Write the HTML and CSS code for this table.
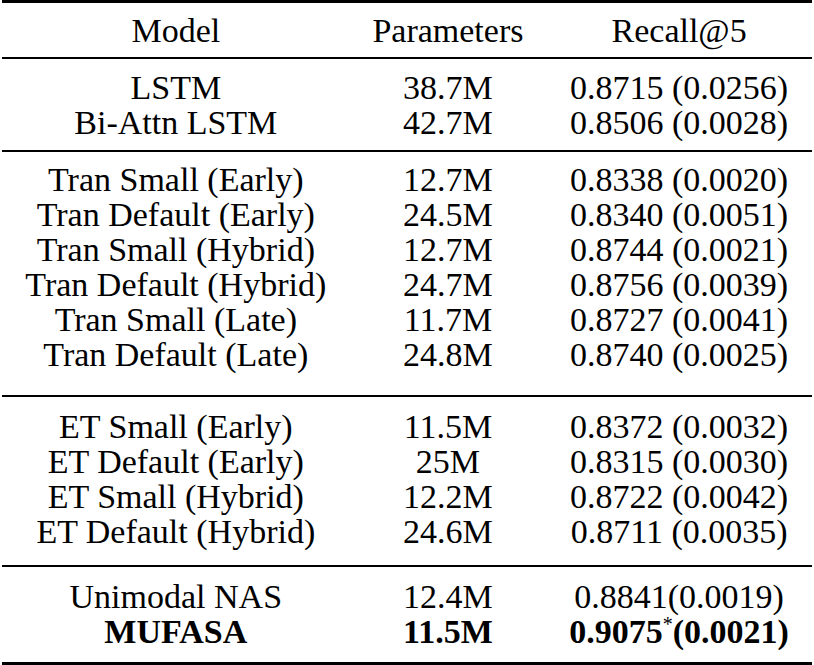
FILE: index.html
```html
<!DOCTYPE html>
<html>
<head>
<meta charset="utf-8">
<link rel="stylesheet" href="styles.css">
</head>
<body>
<div class="wrap">
<table class="results">
  <thead>
    <tr><th>Model</th><th>Parameters</th><th>Recall@5</th></tr>
  </thead>
  <tbody class="g g1">
    <tr><td>LSTM</td><td>38.7M</td><td>0.8715 (0.0256)</td></tr>
    <tr><td>Bi-Attn LSTM</td><td>42.7M</td><td>0.8506 (0.0028)</td></tr>
  </tbody>
  <tbody class="g g2">
    <tr><td>Tran Small (Early)</td><td>12.7M</td><td>0.8338 (0.0020)</td></tr>
    <tr><td>Tran Default (Early)</td><td>24.5M</td><td>0.8340 (0.0051)</td></tr>
    <tr><td>Tran Small (Hybrid)</td><td>12.7M</td><td>0.8744 (0.0021)</td></tr>
    <tr><td>Tran Default (Hybrid)</td><td>24.7M</td><td>0.8756 (0.0039)</td></tr>
    <tr><td>Tran Small (Late)</td><td>11.7M</td><td>0.8727 (0.0041)</td></tr>
    <tr><td>Tran Default (Late)</td><td>24.8M</td><td>0.8740 (0.0025)</td></tr>
  </tbody>
  <tbody class="g g3">
    <tr><td>ET Small (Early)</td><td>11.5M</td><td>0.8372 (0.0032)</td></tr>
    <tr><td>ET Default (Early)</td><td>25M</td><td>0.8315 (0.0030)</td></tr>
    <tr><td>ET Small (Hybrid)</td><td>12.2M</td><td>0.8722 (0.0042)</td></tr>
    <tr><td>ET Default (Hybrid)</td><td>24.6M</td><td>0.8711 (0.0035)</td></tr>
  </tbody>
  <tbody class="g g4">
    <tr><td>Unimodal NAS</td><td>12.4M</td><td>0.8841(0.0019)</td></tr>
    <tr class="best"><td>MUFASA</td><td>11.5M</td><td>0.9075<sup class="star">*</sup>(0.0021)</td></tr>
  </tbody>
</table>
</div>
</body>
</html>
```

FILE: styles.css
```css
html, body {
  margin: 0;
  padding: 0;
  background: #fff;
}

.wrap {
  padding: 0 2px;
}

.results {
  width: 810px;
  border-collapse: separate;
  border-spacing: 0;
  font-family: "Liberation Serif", "Times New Roman", serif;
  font-size: 34px;
  color: #000;
}

.results th,
.results td {
  font-weight: normal;
  text-align: center;
  white-space: nowrap;
  padding: 0 22px;
  height: 35px;
  line-height: 35px;
}

.results thead th {
  border-top: 3px solid #000;
  border-bottom: 2px solid #000;
  padding-top: 10px;
  padding-bottom: 9px;
}

.results tbody.g + tbody.g tr:first-child td {
  border-top: 2px solid #000;
}

.results tbody.g4 tr:last-child td {
  border-bottom: 3px solid #000;
}

.results tbody.g1 tr:first-child td { padding-top: 11px; }
.results tbody.g1 tr:last-child td { padding-bottom: 10px; }

.results tbody.g2 tr:first-child td { padding-top: 10px; }
.results tbody.g2 tr:last-child td { padding-bottom: 23px; }

.results tbody.g3 tr:first-child td { padding-top: 12px; }
.results tbody.g3 tr:last-child td { padding-bottom: 16px; }

.results tbody.g4 tr:first-child td { padding-top: 12px; }
.results tbody.g4 tr:last-child td { padding-bottom: 13px; }

.results tr.best td {
  font-weight: bold;
}

.star {
  font-weight: normal;
  font-size: 20px;
  line-height: 0;
  vertical-align: 12px;
}
```
